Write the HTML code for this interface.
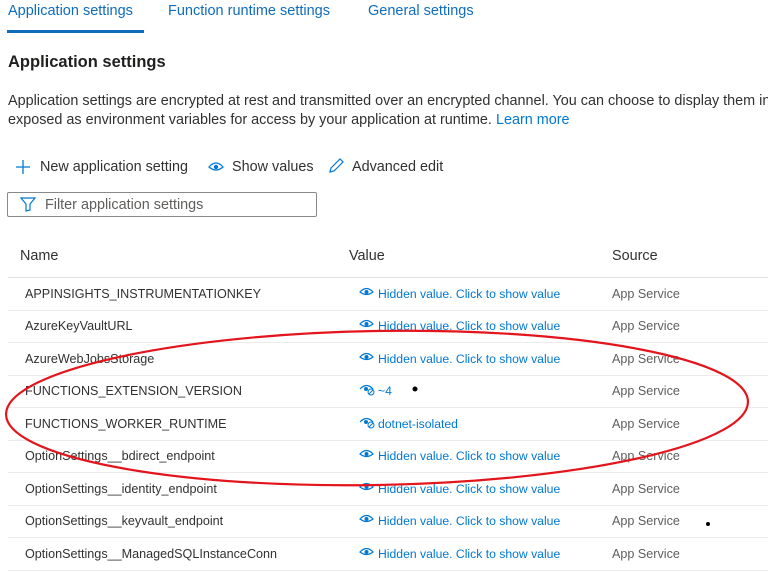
<!DOCTYPE html>
<html><head><style>
body{margin:0;width:768px;height:572px;background:#fff;font-family:"Liberation Sans",sans-serif;position:relative;overflow:hidden;color:#323130}
.a{position:absolute;white-space:nowrap}
.tab{font-size:14.5px;color:#0f6cbd;top:3px}
.row{position:absolute;left:8px;width:760px;height:32px;border-bottom:1px solid #edebe9}
.row span{position:absolute;top:9px;font-size:12.6px}
.n{left:17px;color:#323130}
.v{left:352px;color:#0078d4;font-size:12.2px!important}
.s{left:604px;color:#605e5c}
svg.e{position:absolute;left:351px;top:9px}
</style></head><body>
<div class="a tab" style="left:8px;">Application settings</div>
<div class="a" style="left:7px;top:30px;width:137px;height:3px;background:#0f6cbd"></div>
<div class="a tab" style="left:168px;">Function runtime settings</div>
<div class="a tab" style="left:368px;">General settings</div>
<div class="a" style="left:8px;top:53px;font-size:16.5px;font-weight:bold;color:#201f1e">Application settings</div>
<div class="a" style="left:8px;top:92px;font-size:14.4px;line-height:19px">Application settings are encrypted at rest and transmitted over an encrypted channel. You can choose to display them in<br>exposed as environment variables for access by your application at runtime. <span style="color:#0078d4">Learn more</span></div>
<svg class="a" style="left:15px;top:159px" width="16" height="16"><path d="M8 1v14M1 8h14" stroke="#0078d4" stroke-width="1.3"/></svg>
<div class="a" style="left:40px;top:159px;font-size:14.4px">New application setting</div>
<svg class="a" style="left:208px;top:161px" width="16" height="12"><path d="M1 6Q8-2 15 6Q8 12 1 6Z" fill="none" stroke="#0078d4" stroke-width="1.3"/><circle cx="8" cy="6" r="2.2" fill="#0078d4"/></svg>
<div class="a" style="left:232px;top:159px;font-size:14.4px">Show values</div>
<svg class="a" style="left:328px;top:158px" width="16" height="16"><path d="M2 14l1-4 9-9 3 3-9 9z" fill="none" stroke="#0078d4" stroke-width="1.2"/></svg>
<div class="a" style="left:352px;top:159px;font-size:14.4px">Advanced edit</div>
<div class="a" style="left:7px;top:192px;width:308px;height:23px;border:1px solid #8a8886;border-radius:2px"></div>
<svg class="a" style="left:20px;top:197px" width="16" height="15"><path d="M1 1h14l-5 6v6l-4 1V7z" fill="none" stroke="#0078d4" stroke-width="1.2"/></svg>
<div class="a" style="left:45px;top:197px;font-size:14.4px;color:#605e5c">Filter application settings</div>
<div class="a" style="left:20px;top:248px;font-size:14.4px">Name</div>
<div class="a" style="left:349px;top:248px;font-size:14.4px">Value</div>
<div class="a" style="left:612px;top:248px;font-size:14.4px">Source</div>
<div class="a" style="left:8px;top:277px;width:760px;height:1px;background:#e1dfdd"></div>
<div class="row" style="top:278px"><span class="n">APPINSIGHTS_INSTRUMENTATIONKEY</span><svg class="e" width="15" height="10"><path d="M1 5Q7.5-2 14 5Q7.5 10 1 5Z" fill="none" stroke="#0078d4" stroke-width="1.2"/><circle cx="7.5" cy="5" r="2" fill="#0078d4"/></svg><span class="v" style="left:370px">Hidden value. Click to show value</span><span class="s">App Service</span></div>
<div class="row" style="top:310px"><span class="n">AzureKeyVaultURL</span><svg class="e" width="15" height="10"><path d="M1 5Q7.5-2 14 5Q7.5 10 1 5Z" fill="none" stroke="#0078d4" stroke-width="1.2"/><circle cx="7.5" cy="5" r="2" fill="#0078d4"/></svg><span class="v" style="left:370px">Hidden value. Click to show value</span><span class="s">App Service</span></div>
<div class="row" style="top:343px"><span class="n">AzureWebJobsStorage</span><svg class="e" width="15" height="10"><path d="M1 5Q7.5-2 14 5Q7.5 10 1 5Z" fill="none" stroke="#0078d4" stroke-width="1.2"/><circle cx="7.5" cy="5" r="2" fill="#0078d4"/></svg><span class="v" style="left:370px">Hidden value. Click to show value</span><span class="s">App Service</span></div>
<div class="row" style="top:375px"><span class="n">FUNCTIONS_EXTENSION_VERSION</span><svg class="e" width="16" height="12"><path d="M1 5Q7.5-2 14 5" fill="none" stroke="#0078d4" stroke-width="1.2"/><circle cx="7" cy="5" r="2" fill="#0078d4"/><circle cx="12" cy="8" r="3" fill="#fff" stroke="#0078d4"/><path d="M10 10l4-4" stroke="#0078d4"/></svg><span class="v" style="left:370px">~4</span><span class="s">App Service</span></div>
<div class="row" style="top:408px"><span class="n">FUNCTIONS_WORKER_RUNTIME</span><svg class="e" width="16" height="12"><path d="M1 5Q7.5-2 14 5" fill="none" stroke="#0078d4" stroke-width="1.2"/><circle cx="7" cy="5" r="2" fill="#0078d4"/><circle cx="12" cy="8" r="3" fill="#fff" stroke="#0078d4"/><path d="M10 10l4-4" stroke="#0078d4"/></svg><span class="v" style="left:370px">dotnet-isolated</span><span class="s">App Service</span></div>
<div class="row" style="top:440px"><span class="n">OptionSettings__bdirect_endpoint</span><svg class="e" width="15" height="10"><path d="M1 5Q7.5-2 14 5Q7.5 10 1 5Z" fill="none" stroke="#0078d4" stroke-width="1.2"/><circle cx="7.5" cy="5" r="2" fill="#0078d4"/></svg><span class="v" style="left:370px">Hidden value. Click to show value</span><span class="s">App Service</span></div>
<div class="row" style="top:473px"><span class="n">OptionSettings__identity_endpoint</span><svg class="e" width="15" height="10"><path d="M1 5Q7.5-2 14 5Q7.5 10 1 5Z" fill="none" stroke="#0078d4" stroke-width="1.2"/><circle cx="7.5" cy="5" r="2" fill="#0078d4"/></svg><span class="v" style="left:370px">Hidden value. Click to show value</span><span class="s">App Service</span></div>
<div class="row" style="top:505px"><span class="n">OptionSettings__keyvault_endpoint</span><svg class="e" width="15" height="10"><path d="M1 5Q7.5-2 14 5Q7.5 10 1 5Z" fill="none" stroke="#0078d4" stroke-width="1.2"/><circle cx="7.5" cy="5" r="2" fill="#0078d4"/></svg><span class="v" style="left:370px">Hidden value. Click to show value</span><span class="s">App Service</span></div>
<div class="row" style="top:538px"><span class="n">OptionSettings__ManagedSQLInstanceConn</span><svg class="e" width="15" height="10"><path d="M1 5Q7.5-2 14 5Q7.5 10 1 5Z" fill="none" stroke="#0078d4" stroke-width="1.2"/><circle cx="7.5" cy="5" r="2" fill="#0078d4"/></svg><span class="v" style="left:370px">Hidden value. Click to show value</span><span class="s">App Service</span></div>
<svg class="a" style="left:0;top:0" width="768" height="572"><ellipse cx="377" cy="408" rx="371" ry="77" fill="none" stroke="#e3141b" stroke-width="2.2" transform="rotate(-1 377 408)"/><circle cx="415" cy="389" r="2.5" fill="#000"/><circle cx="708" cy="524" r="2" fill="#000"/></svg>
</body></html>
